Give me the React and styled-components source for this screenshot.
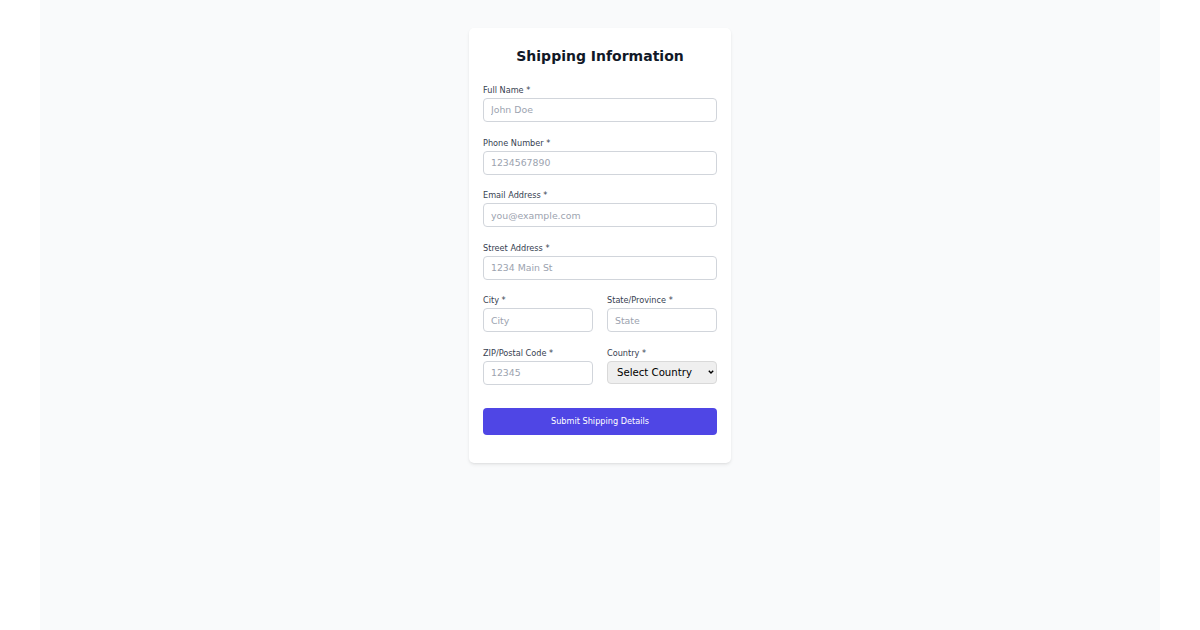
import React from "react";
import styled, { createGlobalStyle } from "styled-components";

const GlobalStyle = createGlobalStyle`
  body {
    margin: 0;
    background: #ffffff;
    font-family: "DejaVu Sans", sans-serif;
  }
`;

const Page = styled.main`
  max-width: 1120px;
  min-height: 630px;
  margin: 0 auto;
  padding-top: 28px;
  box-sizing: border-box;
  background: #f9fafb;
`;

const Card = styled.form`
  width: 262px;
  margin: 0 auto;
  padding: 18.67px 14px 28px;
  box-sizing: border-box;
  background: #ffffff;
  border-radius: 5px;
  box-shadow: 0 2px 4px -1px rgba(0, 0, 0, 0.1), 0 1px 3px -1px rgba(0, 0, 0, 0.08);
  display: flex;
  flex-direction: column;
`;

const Title = styled.h2`
  margin: 0 0 19.67px;
  font-size: 14px;
  line-height: 18.67px;
  font-weight: 700;
  text-align: center;
  color: #111827;
`;

const Fields = styled.div`
  display: flex;
  flex-direction: column;
  gap: 15.6px;
`;

const Row = styled.div`
  display: grid;
  grid-template-columns: minmax(0, 1fr) minmax(0, 1fr);
  gap: 14px;
`;

const Field = styled.div`
  display: flex;
  flex-direction: column;
  min-width: 0;
`;

const Label = styled.label`
  margin-bottom: 1.33px;
  font-size: 8.17px;
  line-height: 11.67px;
  color: #374151;
`;

const Input = styled.input`
  width: 100%;
  height: 24px;
  padding: 0 7px;
  box-sizing: border-box;
  border: 1px solid #d1d5db;
  border-radius: 4px;
  font-family: "DejaVu Sans", sans-serif;
  font-size: 9.33px;
  color: #111827;
  outline: none;

  &::placeholder {
    color: #9ca3af;
  }
`;

const SelectWrap = styled.div`
  position: relative;
  height: 22.7px;
`;

const Select = styled.select`
  appearance: none;
  width: 100%;
  height: 100%;
  box-sizing: border-box;
  border: 1px solid #d9d9d9;
  border-radius: 4px;
  background-color: #efefef;
  font-family: "DejaVu Sans", sans-serif;
  font-size: 10.17px;
  color: #000000;
  padding: 0 14px 0 9px;
  outline: none;
`;

const Chevron = styled.svg`
  position: absolute;
  right: 3px;
  top: 50%;
  width: 6px;
  height: 4px;
  margin-top: -2px;
  pointer-events: none;
`;

const SubmitButton = styled.button`
  margin-top: 22.67px;
  height: 27px;
  border: none;
  border-radius: 4px;
  background: #4f46e5;
  color: #ffffff;
  font-family: "DejaVu Sans", sans-serif;
  font-size: 8.17px;
  cursor: pointer;
`;

const TextField = ({ label, placeholder, type = "text" }) => (
  <Field>
    <Label>{label}</Label>
    <Input type={type} placeholder={placeholder} />
  </Field>
);

export default function App() {
  return (
    <>
      <GlobalStyle />
      <Page>
        <Card onSubmit={(e) => e.preventDefault()}>
          <Title>Shipping Information</Title>
          <Fields>
            <TextField label="Full Name *" placeholder="John Doe" />
            <TextField label="Phone Number *" placeholder="1234567890" type="tel" />
            <TextField label="Email Address *" placeholder="you@example.com" type="email" />
            <TextField label="Street Address *" placeholder="1234 Main St" />
            <Row>
              <TextField label="City *" placeholder="City" />
              <TextField label="State/Province *" placeholder="State" />
            </Row>
            <Row>
              <TextField label="ZIP/Postal Code *" placeholder="12345" />
              <Field>
                <Label>Country *</Label>
                <SelectWrap>
                  <Select defaultValue="">
                    <option value="">Select Country</option>
                    <option value="us">United States</option>
                    <option value="ca">Canada</option>
                    <option value="uk">United Kingdom</option>
                  </Select>
                  <Chevron viewBox="0 0 6 4">
                    <polyline
                      points="0.8,0.8 3,3 5.2,0.8"
                      fill="none"
                      stroke="#000"
                      strokeWidth="1.4"
                    />
                  </Chevron>
                </SelectWrap>
              </Field>
            </Row>
          </Fields>
          <SubmitButton type="submit">Submit Shipping Details</SubmitButton>
        </Card>
      </Page>
    </>
  );
}
